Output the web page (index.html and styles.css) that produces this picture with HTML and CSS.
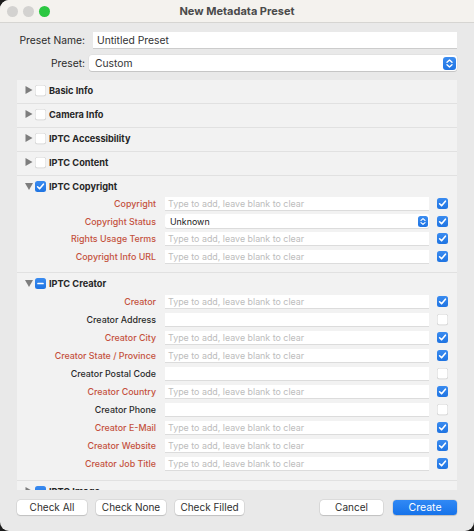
FILE: index.html
```html
<!DOCTYPE html>
<html lang="en">
<head>
<meta charset="utf-8">
<title>New Metadata Preset</title>
<link rel="stylesheet" href="styles.css">
</head>
<body>
<div class="window">
  <header class="titlebar">
    <div class="lights">
      <span class="light off"></span>
      <span class="light off"></span>
      <span class="light green"></span>
    </div>
    <div class="title">New Metadata Preset</div>
  </header>

  <main class="content">
    <div class="top-form">
      <span class="top-label">Preset Name:</span>
      <div class="textfield">Untitled Preset</div>
      <span class="top-label">Preset:</span>
      <div class="popup">
        <span>Custom</span>
        <span class="stepper big"><svg viewBox="0 0 13 13" width="13" height="13"><path d="M4 5.2 L6.5 3 L9 5.2 M4 7.8 L6.5 10 L9 7.8" fill="none" stroke="#fff" stroke-width="1.4" stroke-linecap="round" stroke-linejoin="round"/></svg></span>
      </div>
    </div>

    <div class="panel">
      <section class="section collapsed">
        <div class="sec-head">
          <svg class="tri" viewBox="0 0 7 8" width="7" height="8"><polygon points="0,0 7,4 0,8" fill="#7d7d7d"/></svg>
          <span class="cb"></span>
          <span class="sec-title">Basic Info</span>
        </div>
      </section>
      <section class="section collapsed">
        <div class="sec-head">
          <svg class="tri" viewBox="0 0 7 8" width="7" height="8"><polygon points="0,0 7,4 0,8" fill="#7d7d7d"/></svg>
          <span class="cb"></span>
          <span class="sec-title">Camera Info</span>
        </div>
      </section>
      <section class="section collapsed">
        <div class="sec-head">
          <svg class="tri" viewBox="0 0 7 8" width="7" height="8"><polygon points="0,0 7,4 0,8" fill="#7d7d7d"/></svg>
          <span class="cb"></span>
          <span class="sec-title">IPTC Accessibility</span>
        </div>
      </section>
      <section class="section collapsed">
        <div class="sec-head">
          <svg class="tri" viewBox="0 0 7 8" width="7" height="8"><polygon points="0,0 7,4 0,8" fill="#7d7d7d"/></svg>
          <span class="cb"></span>
          <span class="sec-title">IPTC Content</span>
        </div>
      </section>

      <section class="section expanded copyright">
        <div class="sec-head">
          <svg class="tri" viewBox="0 0 8 7" width="8" height="7"><polygon points="0,0 8,0 4,7" fill="#7d7d7d"/></svg>
          <span class="cb on"><svg viewBox="0 0 11 11" width="11" height="11"><path d="M2.6 5.8 L4.6 7.8 L8.4 3.2" fill="none" stroke="#fff" stroke-width="1.6" stroke-linecap="round" stroke-linejoin="round"/></svg></span>
          <span class="sec-title">IPTC Copyright</span>
        </div>
        <div class="fields">
          <div class="field"><span class="flabel req">Copyright</span><div class="input ph">Type to add, leave blank to clear</div><span class="cb on"><svg viewBox="0 0 11 11" width="11" height="11"><path d="M2.6 5.8 L4.6 7.8 L8.4 3.2" fill="none" stroke="#fff" stroke-width="1.6" stroke-linecap="round" stroke-linejoin="round"/></svg></span></div>
          <div class="field"><span class="flabel req">Copyright Status</span><div class="input select"><span>Unknown</span><span class="stepper small"><svg viewBox="0 0 10 11" width="10" height="11"><path d="M3 4.4 L5 2.6 L7 4.4 M3 6.6 L5 8.4 L7 6.6" fill="none" stroke="#fff" stroke-width="1.2" stroke-linecap="round" stroke-linejoin="round"/></svg></span></div><span class="cb on"><svg viewBox="0 0 11 11" width="11" height="11"><path d="M2.6 5.8 L4.6 7.8 L8.4 3.2" fill="none" stroke="#fff" stroke-width="1.6" stroke-linecap="round" stroke-linejoin="round"/></svg></span></div>
          <div class="field"><span class="flabel req">Rights Usage Terms</span><div class="input ph">Type to add, leave blank to clear</div><span class="cb on"><svg viewBox="0 0 11 11" width="11" height="11"><path d="M2.6 5.8 L4.6 7.8 L8.4 3.2" fill="none" stroke="#fff" stroke-width="1.6" stroke-linecap="round" stroke-linejoin="round"/></svg></span></div>
          <div class="field"><span class="flabel req">Copyright Info URL</span><div class="input ph">Type to add, leave blank to clear</div><span class="cb on"><svg viewBox="0 0 11 11" width="11" height="11"><path d="M2.6 5.8 L4.6 7.8 L8.4 3.2" fill="none" stroke="#fff" stroke-width="1.6" stroke-linecap="round" stroke-linejoin="round"/></svg></span></div>
        </div>
      </section>

      <section class="section expanded creator">
        <div class="sec-head">
          <svg class="tri" viewBox="0 0 8 7" width="8" height="7"><polygon points="0,0 8,0 4,7" fill="#7d7d7d"/></svg>
          <span class="cb on"><svg viewBox="0 0 11 11" width="11" height="11"><path d="M3 5.5 L8 5.5" fill="none" stroke="#fff" stroke-width="1.7" stroke-linecap="round"/></svg></span>
          <span class="sec-title">IPTC Creator</span>
        </div>
        <div class="fields">
          <div class="field"><span class="flabel req">Creator</span><div class="input ph">Type to add, leave blank to clear</div><span class="cb on"><svg viewBox="0 0 11 11" width="11" height="11"><path d="M2.6 5.8 L4.6 7.8 L8.4 3.2" fill="none" stroke="#fff" stroke-width="1.6" stroke-linecap="round" stroke-linejoin="round"/></svg></span></div>
          <div class="field"><span class="flabel">Creator Address</span><div class="input"></div><span class="cb"></span></div>
          <div class="field"><span class="flabel req">Creator City</span><div class="input ph">Type to add, leave blank to clear</div><span class="cb on"><svg viewBox="0 0 11 11" width="11" height="11"><path d="M2.6 5.8 L4.6 7.8 L8.4 3.2" fill="none" stroke="#fff" stroke-width="1.6" stroke-linecap="round" stroke-linejoin="round"/></svg></span></div>
          <div class="field"><span class="flabel req">Creator State / Province</span><div class="input ph">Type to add, leave blank to clear</div><span class="cb on"><svg viewBox="0 0 11 11" width="11" height="11"><path d="M2.6 5.8 L4.6 7.8 L8.4 3.2" fill="none" stroke="#fff" stroke-width="1.6" stroke-linecap="round" stroke-linejoin="round"/></svg></span></div>
          <div class="field"><span class="flabel">Creator Postal Code</span><div class="input"></div><span class="cb"></span></div>
          <div class="field"><span class="flabel req">Creator Country</span><div class="input ph">Type to add, leave blank to clear</div><span class="cb on"><svg viewBox="0 0 11 11" width="11" height="11"><path d="M2.6 5.8 L4.6 7.8 L8.4 3.2" fill="none" stroke="#fff" stroke-width="1.6" stroke-linecap="round" stroke-linejoin="round"/></svg></span></div>
          <div class="field"><span class="flabel">Creator Phone</span><div class="input"></div><span class="cb"></span></div>
          <div class="field"><span class="flabel req">Creator E-Mail</span><div class="input ph">Type to add, leave blank to clear</div><span class="cb on"><svg viewBox="0 0 11 11" width="11" height="11"><path d="M2.6 5.8 L4.6 7.8 L8.4 3.2" fill="none" stroke="#fff" stroke-width="1.6" stroke-linecap="round" stroke-linejoin="round"/></svg></span></div>
          <div class="field"><span class="flabel req">Creator Website</span><div class="input ph">Type to add, leave blank to clear</div><span class="cb on"><svg viewBox="0 0 11 11" width="11" height="11"><path d="M2.6 5.8 L4.6 7.8 L8.4 3.2" fill="none" stroke="#fff" stroke-width="1.6" stroke-linecap="round" stroke-linejoin="round"/></svg></span></div>
          <div class="field"><span class="flabel req">Creator Job Title</span><div class="input ph">Type to add, leave blank to clear</div><span class="cb on"><svg viewBox="0 0 11 11" width="11" height="11"><path d="M2.6 5.8 L4.6 7.8 L8.4 3.2" fill="none" stroke="#fff" stroke-width="1.6" stroke-linecap="round" stroke-linejoin="round"/></svg></span></div>
        </div>
      </section>

      <section class="section collapsed">
        <div class="sec-head">
          <svg class="tri" viewBox="0 0 7 8" width="7" height="8"><polygon points="0,0 7,4 0,8" fill="#7d7d7d"/></svg>
          <span class="cb on"><svg viewBox="0 0 11 11" width="11" height="11"><path d="M3 5.5 L8 5.5" fill="none" stroke="#fff" stroke-width="1.7" stroke-linecap="round"/></svg></span>
          <span class="sec-title">IPTC Image</span>
        </div>
      </section>
    </div>

    <div class="buttons">
      <button class="btn w-all">Check All</button>
      <button class="btn w-none">Check None</button>
      <button class="btn w-filled">Check Filled</button>
      <span class="spacer"></span>
      <button class="btn w-cancel">Cancel</button>
      <button class="btn primary w-create">Create</button>
    </div>
  </main>
</div>
</body>
</html>
```

FILE: styles.css
```css
* { box-sizing: border-box; }

html, body {
  margin: 0;
  padding: 0;
  background: #1c1c1c;
}

body {
  width: 474px;
  height: 531px;
  font-family: Inter, "Noto Sans", "Liberation Sans", sans-serif;
  color: #2a2a2a;
}

.window {
  width: 474px;
  height: 531px;
  background: #e9e9e9;
  border-radius: 9px 0 9px 9px;
  overflow: hidden;
  display: flex;
  flex-direction: column;
}

/* title bar */
.titlebar {
  height: 23px;
  flex: none;
  background: #f4f2ee;
  border-bottom: 1px solid #d6d5d2;
  display: flex;
  align-items: center;
  position: relative;
}

.lights {
  display: flex;
  gap: 5px;
  padding-left: 7px;
}

.light {
  width: 11px;
  height: 11px;
  border-radius: 50%;
  background: #d3d2d0;
}

.light.green {
  background: #2bc741;
}

.title {
  position: absolute;
  left: 0;
  right: 0;
  text-align: center;
  font-size: 11px;
  font-weight: 700;
  color: #4a4a4a;
  line-height: 22px;
}

/* content */
.content {
  flex: 1;
  padding: 9px 17px 0 17px;
  display: flex;
  flex-direction: column;
}

.top-form {
  display: grid;
  grid-template-columns: 68px 1fr;
  column-gap: 8px;
  row-gap: 7px;
  align-items: center;
}

.top-label {
  text-align: right;
  justify-self: end;
  white-space: nowrap;
  font-size: 10.3px;
  color: #2b2b2b;
  line-height: 16px;
}

.textfield {
  height: 16px;
  background: #fff;
  font-size: 10.3px;
  line-height: 16px;
  padding-left: 4px;
  color: #333;
  box-shadow: 0 1px 0 rgba(0,0,0,0.12);
}

.popup {
  margin-left: -4px;
  height: 16px;
  background: #fff;
  border-radius: 3px;
  font-size: 10.3px;
  line-height: 16px;
  padding-left: 6px;
  padding-right: 1px;
  color: #333;
  display: flex;
  align-items: center;
  justify-content: space-between;
  box-shadow: 0 1px 0 rgba(0,0,0,0.12), 0 0 0 0.5px rgba(0,0,0,0.06);
}

.stepper {
  display: flex;
  align-items: center;
  justify-content: center;
  background: linear-gradient(#3b8cf0, #1f74e3);
  border-radius: 3px;
}

.stepper.big {
  width: 13px;
  height: 13px;
}

.stepper.small {
  width: 10px;
  height: 11px;
  border-radius: 2.5px;
}

/* panel */
.panel {
  height: 410px;
  margin-top: 9px;
  background: #f2f2f2;
  overflow: hidden;
  flex: none;
}

.section {
  border-bottom: 1px solid #e1e1e1;
}

.section.collapsed {
  padding-bottom: 4px;
}

.section.copyright {
  padding-bottom: 7px;
}

.section.creator {
  padding-bottom: 8px;
}

.sec-head {
  height: 19px;
  display: flex;
  align-items: center;
  padding-left: 8px;
  padding-top: 1px;
}

.tri {
  display: block;
  flex: none;
  width: 8px;
  margin-right: 2px;
}

.sec-title {
  font-size: 9.2px;
  font-weight: 700;
  color: #262626;
  margin-left: 3px;
}

.cb {
  width: 11px;
  height: 11px;
  flex: none;
  border-radius: 2.5px;
  background: #fff;
  box-shadow: inset 0 0 0 0.5px rgba(0,0,0,0.18), 0 0.5px 0.5px rgba(0,0,0,0.08);
  display: flex;
  align-items: center;
  justify-content: center;
}

.cb.on {
  background: linear-gradient(#3a8bf0, #1f74e2);
  box-shadow: none;
}

.cb svg {
  display: block;
}

/* fields */
.fields {
  display: flex;
  flex-direction: column;
}

.field {
  display: grid;
  grid-template-columns: 139px 265px 11px;
  column-gap: 8px;
  align-items: center;
  padding-right: 10px;
  height: 18px;
}

.copyright .field {
  height: 17.5px;
}

.field .input {
  margin-left: 1px;
}

.flabel {
  text-align: right;
  font-size: 8.9px;
  font-weight: 500;
  color: #2a2a2a;
  white-space: nowrap;
}

.flabel.req {
  color: #c4513d;
}

.input {
  height: 13px;
  background: #fff;
  box-shadow: 0 1px 0 rgba(0,0,0,0.09);
  font-size: 8.9px;
  line-height: 13px;
  padding-left: 3px;
  color: #222;
  white-space: nowrap;
  overflow: hidden;
}

.input.ph {
  color: #bcbcbc;
}

.input.select {
  display: flex;
  align-items: center;
  justify-content: space-between;
  padding-left: 5px;
  padding-right: 1px;
  border-radius: 2px;
  height: 14px;
}

/* buttons */
.buttons {
  margin-top: 10px;
  display: flex;
  align-items: center;
  gap: 9px;
  height: 15px;
}

.spacer {
  flex: 1;
}

.btn {
  height: 15px;
  padding: 0;
  border: none;
  border-radius: 3.5px;
  background: #fff;
  font-family: inherit;
  font-size: 10px;
  color: #2e2e2e;
  line-height: 15px;
  box-shadow: 0 0 0 0.5px rgba(0,0,0,0.12), 0 1px 1px rgba(0,0,0,0.12);
}

.btn.primary {
  background: linear-gradient(#3189f5, #1673ea);
  color: #fff;
  font-size: 10.5px;
}

.w-all { width: 70px; }
.w-none { width: 70px; }
.w-filled { width: 69px; }
.w-cancel { width: 63px; }
.w-create { width: 64px; margin-left: 1px; }
```
